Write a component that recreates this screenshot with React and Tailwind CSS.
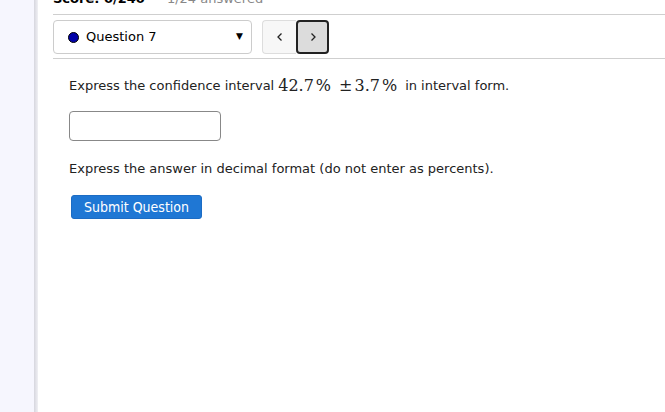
export default function App() {
  const font = { fontFamily: '"DejaVu Sans", sans-serif' };
  const mathFont = { fontFamily: '"DejaVu Serif", "Liberation Serif", serif' };
  return (
    <div className="flex h-[412px] w-[665px] overflow-hidden bg-white text-[#222]" style={font}>
      <div className="w-[34px] shrink-0 bg-[#f6f6fe]" />
      <div className="w-[4px] shrink-0 bg-gradient-to-r from-[#d6d6de] to-[#f0f0f4]" />
      <div className="flex-1 pl-[15px]">
        <div className="-mt-[16px] flex h-[31px] items-center gap-[22px] border-b border-[#cfcfcf] text-[13px]">
          <span className="font-bold text-black">Score: 0/240</span>
          <span className="text-[#888]">1/24 answered</span>
        </div>
        <div className="flex items-center gap-[10px] border-b border-[#cfcfcf] pb-[4px] pt-[5px]">
          <div className="flex h-[34px] w-[199px] items-center rounded-[4px] border border-[#ccc] pl-[14px] pr-[8px] text-[13px] text-black">
            <span className="mr-[7px] h-[11px] w-[11px] rounded-full border border-black bg-[#0000a8]" />
            <span>Question 7</span>
            <span className="ml-auto text-[9px]">▼</span>
          </div>
          <div className="flex h-[34px]">
            <button className="flex w-[34px] items-center justify-center rounded-l-[4px] border border-r-0 border-[#ddd] bg-[#f7f7f7]">
              <svg width="8" height="10" viewBox="0 0 8 10" fill="none" stroke="#222" strokeWidth="1.3">
                <path d="M5.5 1.5 2 5l3.5 3.5" />
              </svg>
            </button>
            <button className="flex w-[33px] items-center justify-center rounded-[4px] border-2 border-[#222] bg-[#dcdcdc]">
              <svg width="8" height="10" viewBox="0 0 8 10" fill="none" stroke="#222" strokeWidth="1.3">
                <path d="M2.5 1.5 6 5 2.5 8.5" />
              </svg>
            </button>
          </div>
        </div>
        <div className="pl-[16px] pt-[16px] text-[13px] text-[#222]">
          <p className="flex h-[22px] items-center">
            <span>Express the confidence interval</span>
            <span className="ml-[4px] text-[16px]" style={mathFont}>
              42.7<span className="ml-[2px]">%</span>
              <span className="ml-[8px]">±</span>
              <span className="ml-[2px]">3.7</span>
              <span className="ml-[2px]">%</span>
            </span>
            <span className="ml-[8px]">in interval form.</span>
          </p>
          <input className="mt-[14px] block h-[30px] w-[152px] rounded-[4px] border border-[#888] px-2 outline-none" />
          <p className="mt-[18px] h-[18px]">Express the answer in decimal format (do not enter as percents).</p>
          <button
            className="ml-[2px] mt-[18px] h-[24px] rounded-[3px] border border-[#1c6cc4] bg-[#1f77d4] px-[12px] text-[14px] text-white"
            style={{ fontFamily: '"DejaVu Sans Condensed", sans-serif' }}
          >
            Submit Question
          </button>
        </div>
      </div>
    </div>
  );
}
